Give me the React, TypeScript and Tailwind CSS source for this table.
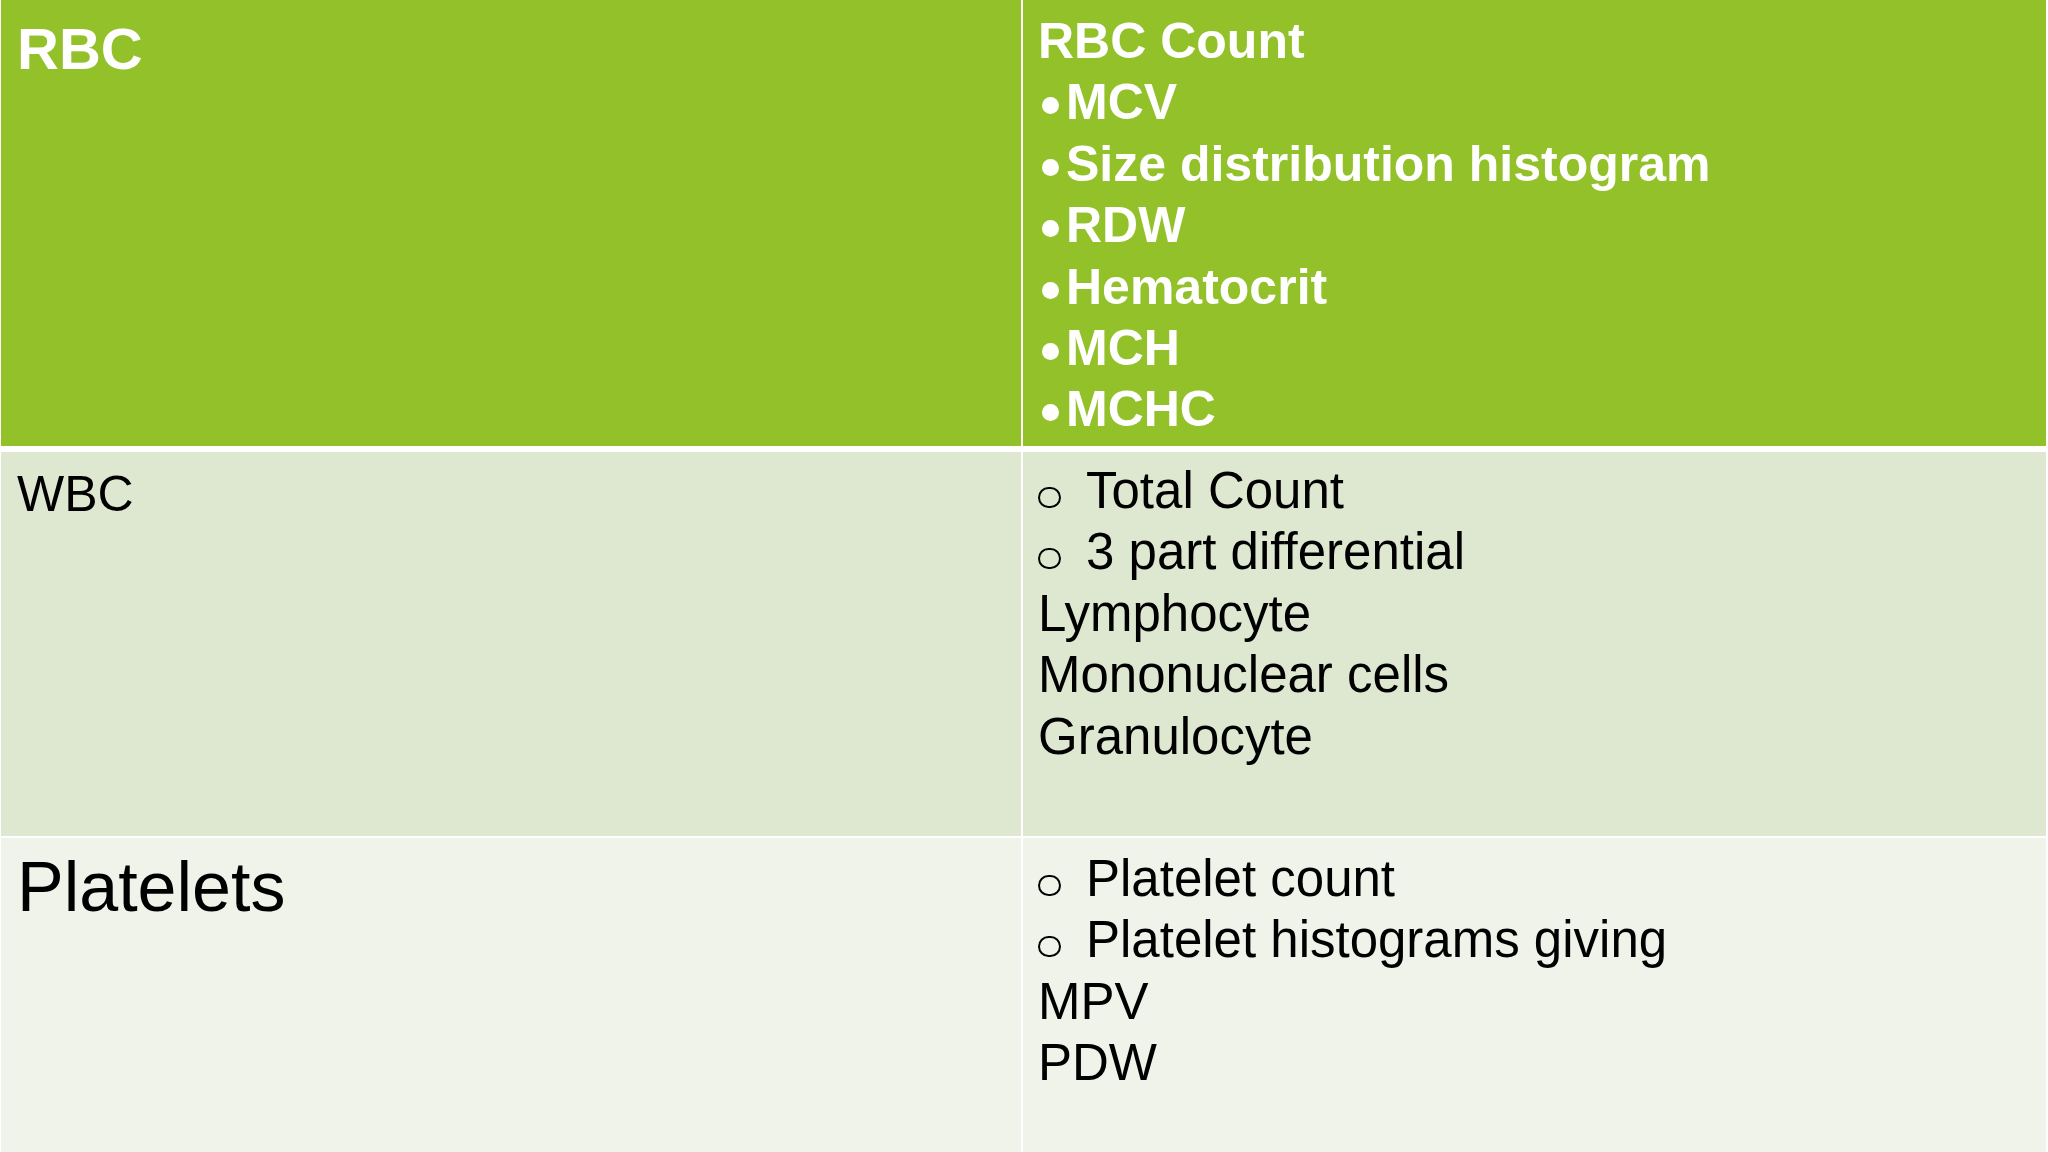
import React from 'react';

const Circle = () => (
  <span className="inline-block w-[23px] h-[21px] rounded-full border-[2.5px] border-black mr-[25px] align-baseline" />
);

const Dot = () => (
  <span className="inline-block w-[17px] h-[17px] rounded-full bg-white ml-[4px] mr-[7px] mb-[5px] align-baseline" />
);

const App = () => {
  return (
    <div className="w-[2048px] h-[1152px] bg-white flex flex-col pl-[1px] pr-[2px] font-['Liberation_Sans',Arial,sans-serif]">
      {/* Header row */}
      <div className="grid grid-cols-[1020px_1fr] gap-x-[2px] h-[446px]">
        <div className="bg-[#92c12a] px-[16px] pt-[14px]">
          <div className="text-white font-bold text-[58px] leading-[70px]">RBC</div>
        </div>
        <div className="bg-[#92c12a] px-[15px] pt-[11px] text-white font-bold text-[50px] leading-[61.4px]">
          <div>RBC Count</div>
          {['MCV', 'Size distribution histogram', 'RDW', 'Hematocrit', 'MCH', 'MCHC'].map((item) => (
            <div key={item}>
              <Dot />
              {item}
            </div>
          ))}
        </div>
      </div>

      {/* WBC row */}
      <div className="grid grid-cols-[1020px_1fr] gap-x-[2px] h-[384px] mt-[6px]">
        <div className="bg-[#dee8d1] px-[16px] pt-[12px]">
          <div className="text-black text-[50px] leading-[61.4px]">WBC</div>
        </div>
        <div className="bg-[#dee8d1] px-[15px] pt-[8px] text-black text-[51px] leading-[61.4px]">
          <div><Circle />Total Count</div>
          <div><Circle />3 part differential</div>
          <div>Lymphocyte</div>
          <div>Mononuclear cells</div>
          <div>Granulocyte</div>
        </div>
      </div>

      {/* Platelets row */}
      <div className="grid grid-cols-[1020px_1fr] gap-x-[2px] flex-1 mt-[2px]">
        <div className="bg-[#eff3ea] px-[16px] pt-[7px]">
          <div className="text-black text-[70px] leading-[84px]">Platelets</div>
        </div>
        <div className="bg-[#eff3ea] px-[15px] pt-[10px] text-black text-[51px] leading-[61.4px]">
          <div><Circle />Platelet count</div>
          <div><Circle />Platelet histograms giving</div>
          <div>MPV</div>
          <div>PDW</div>
        </div>
      </div>
    </div>
  );
};

export default App;
